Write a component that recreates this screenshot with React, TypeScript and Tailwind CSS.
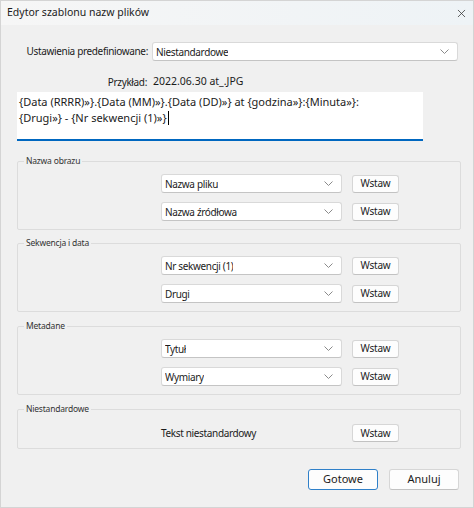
import { X } from 'lucide-react';

const font = { fontFamily: '"Noto Sans", "Open Sans", sans-serif' };

function Chevron() {
  return (
    <svg width="9" height="5" viewBox="0 0 9 5" className="shrink-0">
      <path d="M0.5 0.5 L4.5 4.5 L8.5 0.5" fill="none" stroke="#8a8a8a" strokeWidth="1" />
    </svg>
  );
}

function Combo({ value, className }: { value: string; className: string }) {
  return (
    <div
      className={`flex items-center justify-between bg-white border border-[#d9d9d9] border-b-[#c4c4c4] rounded-[3px] pl-[3px] pr-[8px] text-[10px] tracking-[-0.35px] leading-[14px] text-[#1b1b1b] ${className}`}
    >
      <span className="truncate whitespace-nowrap">{value}</span>
      <Chevron />
    </div>
  );
}

function Btn({ label, className = '' }: { label: string; className?: string }) {
  return (
    <button
      className={`flex items-center justify-center bg-[#fdfdfd] border border-[#d6d6d6] border-b-[#c2c2c2] rounded-[3px] text-[#1b1b1b] ${className}`}
    >
      {label}
    </button>
  );
}

function Group({ title, children, className = '' }: { title: string; children: React.ReactNode; className?: string }) {
  return (
    <fieldset className={`border border-[#dcdcdc] rounded-[2px] ml-[16px] w-[444px] px-0 ${className}`}>
      <legend className="ml-[6px] px-[2px] text-[8.5px] tracking-[-0.2px] leading-[12px] text-[#333]">{title}</legend>
      {children}
    </fieldset>
  );
}

function ComboRow({ value }: { value: string }) {
  return (
    <div className="flex items-center pl-[143px]">
      <Combo value={value} className="w-[181px] h-[19px]" />
      <Btn label="Wstaw" className="ml-[10px] w-[47px] h-[18px] text-[10px] tracking-[-0.2px]" />
    </div>
  );
}

export default function App() {
  return (
    <div
      className="w-[474px] h-[508px] bg-[#f0f0f0] border border-[#d4d4d4] flex flex-col overflow-hidden"
      style={font}
    >
      {/* title bar */}
      <div className="h-[24px] shrink-0 flex items-center justify-between bg-gradient-to-r from-[#f6f6f6] to-[#eef3f6] pl-[6px] pr-[5px]">
        <span className="text-[10.5px] text-[#1b1b1b]">Edytor szablonu nazw plików</span>
        <X className="w-[13px] h-[13px] text-[#333]" strokeWidth={1.4} />
      </div>

      {/* preset */}
      <div className="flex items-center mt-[17px] h-[19px]">
        <span className="w-[147px] text-right text-[10px] tracking-[-0.35px] whitespace-nowrap text-[#1b1b1b]">Ustawienia predefiniowane:</span>
        <Combo value="Niestandardowe" className="ml-[4px] w-[306px] h-[19px]" />
      </div>

      {/* example */}
      <div className="flex items-center mt-[13px] h-[16px] text-[10px] text-[#1b1b1b]">
        <span className="w-[146px] text-right tracking-[-0.35px]">Przykład:</span>
        <span className="ml-[6px] text-[10.5px]">2022.06.30 at_.JPG</span>
      </div>

      {/* template editor */}
      <div className="ml-[16px] mt-[2px] w-[406px] h-[49px] bg-white border-b-2 border-[#0067c0] px-[2px] pt-[2px] text-[11px] leading-[16px] text-[#1b1b1b]">
        <div className="whitespace-nowrap">{'{Data (RRRR)»}.{Data (MM)»}.{Data (DD)»} at {godzina»}:{Minuta»}:'}</div>
        <div className="flex items-center">
          {'{Drugi»} - {Nr sekwencji (1)»}'}
          <span className="inline-block w-px h-[14px] bg-black ml-px" />
        </div>
      </div>

      <Group title="Nazwa obrazu" className="mt-[14px] pt-[7px] pb-[8px]">
        <div className="flex flex-col gap-[9px]">
          <ComboRow value="Nazwa pliku" />
          <ComboRow value="Nazwa źródłowa" />
        </div>
      </Group>

      <Group title="Sekwencja i data" className="mt-[7px] pt-[7px] pb-[8px]">
        <div className="flex flex-col gap-[9px]">
          <ComboRow value="Nr sekwencji (1)" />
          <ComboRow value="Drugi" />
        </div>
      </Group>

      <Group title="Metadane" className="mt-[8px] pt-[7px] pb-[8px]">
        <div className="flex flex-col gap-[9px]">
          <ComboRow value="Tytuł" />
          <ComboRow value="Wymiary" />
        </div>
      </Group>

      <Group title="Niestandardowe" className="mt-[8px] pt-[9px] pb-[6px]">
        <div className="flex items-center pl-[143px]">
          <span className="w-[181px] text-[10px] tracking-[-0.35px] text-[#1b1b1b]">Tekst niestandardowy</span>
          <Btn label="Wstaw" className="ml-[10px] w-[47px] h-[18px] text-[10px] tracking-[-0.2px]" />
        </div>
      </Group>

      {/* footer */}
      <div className="flex justify-end gap-[11px] mt-[20px] pr-[14px]">
        <Btn label="Gotowe" className="w-[70px] h-[21px] !border-[#2f80c9] text-[11px]" />
        <Btn label="Anuluj" className="w-[70px] h-[21px] text-[11px]" />
      </div>
    </div>
  );
}
